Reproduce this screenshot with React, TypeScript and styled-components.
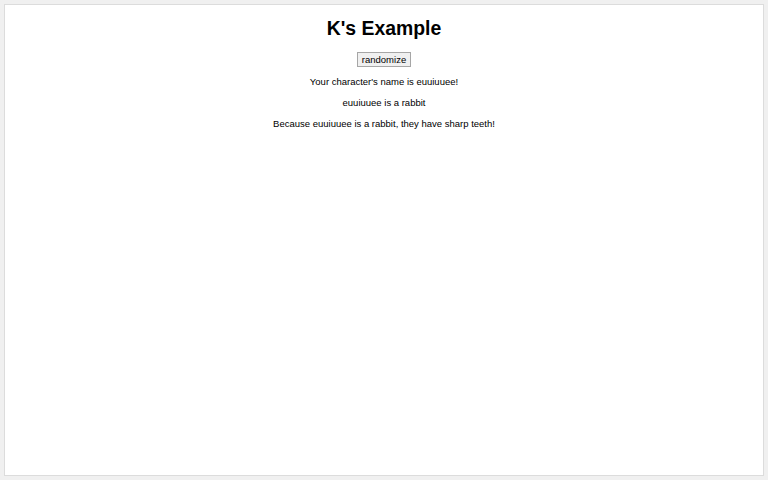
import React, { useState } from "react";
import styled, { createGlobalStyle } from "styled-components";

const GlobalStyle = createGlobalStyle`
  html, body {
    margin: 0;
    padding: 0;
    height: 100%;
    background: #f0f0f0;
  }
  body {
    padding: 4px;
    box-sizing: border-box;
    font-family: "Liberation Sans", Arial, sans-serif;
  }
  #root {
    height: 100%;
  }
`;

const Panel = styled.main`
  box-sizing: border-box;
  height: 472px;
  background: #ffffff;
  border: 1px solid #dcdcdc;
  display: flex;
  flex-direction: column;
  align-items: center;
  padding-top: 11px;
  color: #000;
`;

const Title = styled.h1`
  margin: 0 0 12px;
  font-size: 19.4px;
  font-weight: 700;
  line-height: 24px;
`;

const Button = styled.button`
  font-family: "Liberation Sans", Arial, sans-serif;
  font-size: 9.5px;
  line-height: 11px;
  padding: 1px 4px;
  background: #f0f0f0;
  border: 1px solid #a6a6a6;
  border-radius: 0;
  color: #000;
  margin-bottom: 2px;
`;

const Line = styled.p`
  margin: 4px 0 0;
  font-size: 9.5px;
  line-height: 17px;
`;

const names = ["euuiuuee", "oaeoia", "iiuaeo", "auoeei"];
const animals = ["rabbit", "cat", "fox", "owl"];

export default function App() {
  const [idx, setIdx] = useState(0);
  const name = names[idx % names.length];
  const animal = animals[idx % animals.length];
  return (
    <>
      <GlobalStyle />
      <Panel>
        <Title>K's Example</Title>
        <Button onClick={() => setIdx((i) => i + 1)}>randomize</Button>
        <Line>Your character's name is {name}!</Line>
        <Line>{name} is a {animal}</Line>
        <Line>
          Because {name} is a {animal}, they have sharp teeth!
        </Line>
      </Panel>
    </>
  );
}
